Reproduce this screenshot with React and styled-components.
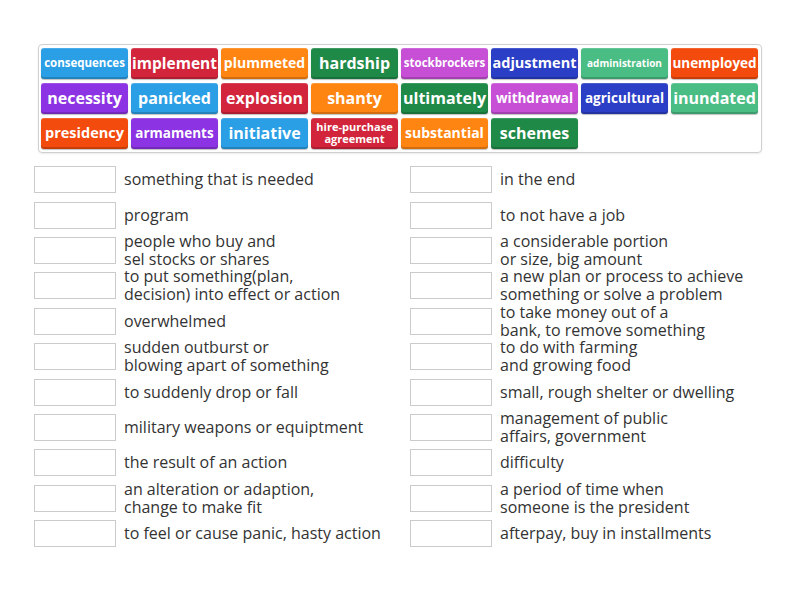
import React from 'react';
import styled, { createGlobalStyle } from 'styled-components';

const GlobalStyle = createGlobalStyle`
  body {
    margin: 0;
    background: #fff;
    font-family: 'Open Sans', 'Liberation Sans', sans-serif;
  }
`;

const palette = [
  '#2b9fe6', // light blue
  '#d2253b', // red
  '#ff8512', // orange
  '#1f8a47', // green
  '#c64fd6', // magenta
  '#2a3ec6', // blue
  '#4abd85', // teal
  '#f34b0d', // orange red
  '#8c33e3', // purple
];

const words = [
  { text: 'consequences', size: 11.5 },
  { text: 'implement', size: 15.5 },
  { text: 'plummeted', size: 14 },
  { text: 'hardship', size: 16 },
  { text: 'stockbrockers', size: 11.5 },
  { text: 'adjustment', size: 14.5 },
  { text: 'administration', size: 10 },
  { text: 'unemployed', size: 13.5 },
  { text: 'necessity', size: 16 },
  { text: 'panicked', size: 16 },
  { text: 'explosion', size: 16 },
  { text: 'shanty', size: 16 },
  { text: 'ultimately', size: 16 },
  { text: 'withdrawal', size: 13.5 },
  { text: 'agricultural', size: 13.5 },
  { text: 'inundated', size: 16 },
  { text: 'presidency', size: 14.5 },
  { text: 'armaments', size: 13.5 },
  { text: 'initiative', size: 16 },
  { text: 'hire-purchase agreement', size: 11, wrap: true },
  { text: 'substantial', size: 14 },
  { text: 'schemes', size: 16 },
];

const left = [
  'something that is needed',
  'program',
  'people who buy and\nsel stocks or shares',
  'to put something(plan,\ndecision) into effect or action',
  'overwhelmed',
  'sudden outburst or\nblowing apart of something',
  'to suddenly drop or fall',
  'military weapons or equiptment',
  'the result of an action',
  'an alteration or adaption,\nchange to make fit',
  'to feel or cause panic, hasty action',
];

const right = [
  'in the end',
  'to not have a job',
  'a considerable portion\nor size, big amount',
  'a new plan or process to achieve\nsomething or solve a problem',
  'to take money out of a\nbank, to remove something',
  'to do with farming\nand growing food',
  'small, rough shelter or dwelling',
  'management of public\naffairs, government',
  'difficulty',
  'a period of time when\nsomeone is the president',
  'afterpay, buy in installments',
];

export default function App() {
  return (
    <>
      <GlobalStyle />
      <Page>
        <Bank>
          {words.map((w, i) => (
            <Tile key={w.text} color={palette[i % palette.length]} size={w.size} wrap={w.wrap ? 1 : 0}>
              {w.wrap ? <>hire-purchase<br />agreement</> : w.text}
            </Tile>
          ))}
        </Bank>
        <Columns>
          {[left, right].map((col, c) => (
            <Column key={c}>
              {col.map((def) => (
                <Row key={def}>
                  <Slot />
                  <Definition>{def}</Definition>
                </Row>
              ))}
            </Column>
          ))}
        </Columns>
      </Page>
    </>
  );
}

const Page = styled.div`
  width: 800px;
  height: 600px;
  padding: 44px 0 0 34px;
  box-sizing: border-box;
`;

const Bank = styled.div`
  margin-left: 4px;
  width: 724px;
  box-sizing: border-box;
  border: 1px solid #cfcfcf;
  border-radius: 4px;
  box-shadow: 0 1px 2px rgba(0, 0, 0, 0.08);
  padding: 3px 2px 3px 2px;
  display: flex;
  flex-wrap: wrap;
  gap: 4px 3px;
`;

const Tile = styled.div`
  width: 87px;
  height: 31px;
  box-sizing: border-box;
  border-radius: 3px;
  background: ${(p) => p.color};
  box-shadow: inset 0 -2px 0 rgba(0, 0, 0, 0.18), inset 0 1px 0 rgba(255, 255, 255, 0.15),
    0 1px 1px rgba(0, 0, 0, 0.25);
  color: #fff;
  font-weight: 700;
  font-size: ${(p) => p.size}px;
  line-height: ${(p) => (p.wrap ? '12px' : '30px')};
  padding-bottom: 1px;
  display: flex;
  align-items: center;
  justify-content: center;
  text-align: center;
  white-space: nowrap;
  overflow: hidden;
`;

const Columns = styled.div`
  display: grid;
  grid-template-columns: 376px 376px;
  margin-top: 9px;
`;

const Column = styled.div`
  display: grid;
  grid-auto-rows: 35.4px;
`;

const Row = styled.div`
  display: flex;
  align-items: center;
  gap: 8px;
`;

const Slot = styled.div`
  width: 82px;
  height: 27px;
  flex: none;
  box-sizing: border-box;
  border: 1px solid #cbcbcb;
  background: #fff;
`;

const Definition = styled.div`
  font-size: 16px;
  line-height: 18px;
  color: #333;
  white-space: pre-line;
  margin-top: -1px;
`;
